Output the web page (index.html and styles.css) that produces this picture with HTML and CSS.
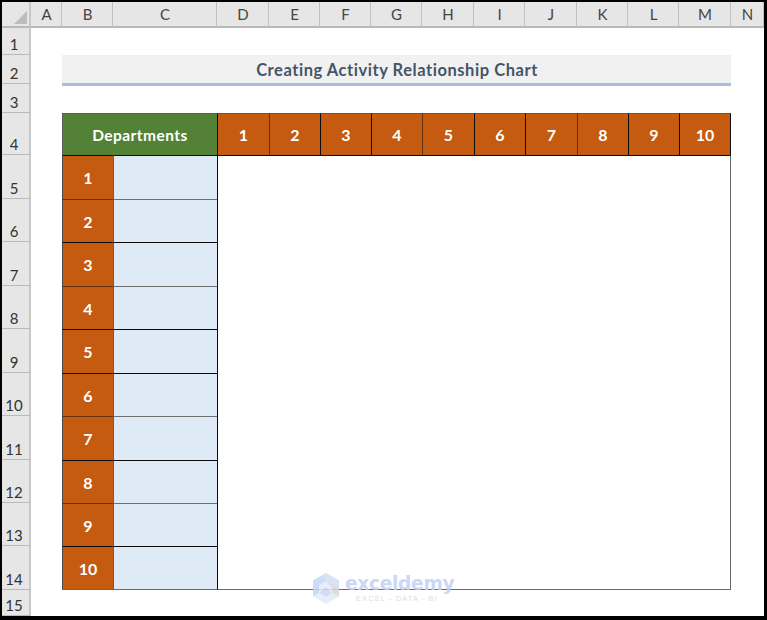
FILE: index.html
```html
<!DOCTYPE html>
<html lang="en">
<head>
<meta charset="utf-8">
<title>Creating Activity Relationship Chart</title>
<link rel="stylesheet" href="styles.css">
</head>
<body>
<div class="frame">
  <div class="sheet">
    <div class="corner"><span class="corner-mark"></span></div>
    <div class="ch">A</div><div class="ch">B</div><div class="ch">C</div><div class="ch">D</div><div class="ch">E</div><div class="ch">F</div><div class="ch">G</div><div class="ch">H</div><div class="ch">I</div><div class="ch">J</div><div class="ch">K</div><div class="ch">L</div><div class="ch">M</div><div class="ch">N</div>

    <div class="rh">1</div><div class="blank-row"></div>

    <div class="rh">2</div><div></div>
    <div class="title">Creating Activity Relationship Chart</div><div></div>

    <div class="rh">3</div><div class="blank-row"></div>

    <div class="rh">4</div><div></div>
    <div class="cell dept-head">Departments</div>
    <div class="cell num top">1</div>
    <div class="cell num top soft">2</div>
    <div class="cell num top">3</div>
    <div class="cell num top">4</div>
    <div class="cell num top soft">5</div>
    <div class="cell num top">6</div>
    <div class="cell num top">7</div>
    <div class="cell num top soft">8</div>
    <div class="cell num top">9</div>
    <div class="cell num top last">10</div>
    <div></div>

    <div class="rh">5</div><div></div>
    <div class="cell num first">1</div><div class="cell name"></div>
    <div class="cell chart"></div><div></div>

    <div class="rh">6</div><div></div>
    <div class="cell num first soft-top">2</div><div class="cell name soft-top"></div><div></div>

    <div class="rh">7</div><div></div>
    <div class="cell num first">3</div><div class="cell name"></div><div></div>

    <div class="rh">8</div><div></div>
    <div class="cell num first soft-top">4</div><div class="cell name soft-top"></div><div></div>

    <div class="rh">9</div><div></div>
    <div class="cell num first">5</div><div class="cell name"></div><div></div>

    <div class="rh">10</div><div></div>
    <div class="cell num first">6</div><div class="cell name"></div><div></div>

    <div class="rh">11</div><div></div>
    <div class="cell num first soft-top">7</div><div class="cell name soft-top"></div><div></div>

    <div class="rh">12</div><div></div>
    <div class="cell num first">8</div><div class="cell name"></div><div></div>

    <div class="rh">13</div><div></div>
    <div class="cell num first soft-top">9</div><div class="cell name soft-top"></div><div></div>

    <div class="rh">14</div><div></div>
    <div class="cell num first bottom">10</div><div class="cell name bottom"></div><div></div>

    <div class="rh">15</div><div class="blank-row"></div>

    <div class="watermark">
      <svg class="wm-logo" width="28" height="32" viewBox="0 0 28 32" aria-hidden="true">
        <polygon points="14,0 27,7.5 27,23.5 14,31 1,23.5 1,7.5" fill="#e6ebf9"/>
        <polygon points="14,0 27,7.5 27,15 14,8 1,15 1,7.5" fill="#d3dcf6"/>
        <polygon points="1,7.5 10,3 14,8 7,12 7,20 1,23.5" fill="#c6d4f6"/>
        <polygon points="14,8 27,15 27,23.5 20,20 20,14" fill="#d8d8d8"/>
        <polygon points="7,20 14,14 20,20 14,24" fill="#cbd7f5"/>
      </svg>
      <div class="wm-text">
        <span class="wm-name">exceldemy</span>
        <span class="wm-tag">EXCEL - DATA - BI</span>
      </div>
    </div>
  </div>
</div>
</body>
</html>
```
FILE: styles.css
```css
* { box-sizing: border-box; }
html, body { margin: 0; padding: 0; }
body { background: #000; }

.frame {
  width: 767px;
  height: 620px;
  background: #000;
  padding: 2px 3px 4px 2px;
  overflow: hidden;
}

.sheet {
  position: relative;
  display: grid;
  width: 762px;
  height: 614px;
  background: #fff;
  font-family: "Lato", "Liberation Sans", sans-serif;
  grid-template-columns: 29px 31px 51px 104px 52px 51px 51px 51px 52px 51px 52px 51px 51px 52px 33px;
  grid-template-rows: 26px 27px 29px 29px 42px 44px 43px 44px 43px 44px 43px 44px 43px 43px 44px 26px;
}

.corner, .ch {
  background: #e6e6e6;
  border-bottom: 2px solid #b9b9b9;
}
.corner { border-right: 2px solid #c8c8c8; position: relative; }
.corner-mark {
  position: absolute;
  left: 12px;
  top: 9px;
  width: 13px;
  height: 13px;
  background: #bdbdbd;
  clip-path: polygon(100% 0, 100% 100%, 0 100%);
}

.ch {
  display: flex;
  align-items: center;
  justify-content: center;
  border-right: 1px solid #c0c0c0;
  font-size: 15px;
  color: #444;
  padding: 0 0 1px 1px;
}

.rh {
  display: flex;
  align-items: flex-end;
  justify-content: center;
  background: #e6e6e6;
  border-right: 2px solid #c8c8c8;
  border-bottom: 1px solid #b9b9b9;
  font-size: 15px;
  line-height: 18px;
  color: #333;
  padding: 0 3px 1px 0;
}

.blank-row { grid-column: span 14; }

.title {
  grid-column: span 12;
  display: flex;
  align-items: center;
  justify-content: center;
  background: #f1f1f1;
  border-bottom: 1px solid #a9bde2;
  box-shadow: 0 2px 0 #a9bde2;
  font-weight: 700;
  font-size: 16.5px;
  letter-spacing: 0.55px;
  color: #44546a;
  padding: 1px 0 0 1px;
}

.cell {
  display: flex;
  align-items: center;
  justify-content: center;
  border-top: 1px solid #0c0c0c;
  border-left: 1px solid #0c0c0c;
  font-weight: 700;
  font-size: 16px;
  color: #fff;
}

.dept-head {
  grid-column: span 2;
  background: #538135;
  border-top-color: #5a5a5a;
  border-left-color: #5a5a5a;
  font-size: 15.5px;
  letter-spacing: 0.45px;
}

.num { background: #c55a11; }
.num.top { border-top-color: #5a5a5a; }
.num.top.soft { border-left-color: #64310f; }
.num.top.last { border-right: 1px solid #0c0c0c; }
.num.first { border-left-color: #4a4a4a; }

.name { background: #deeaf6; border-left-color: #5f5f5f; }

.soft-top { border-top-color: #6f6f6f; }
.num.soft-top { border-top-color: #64310f; }

.bottom { border-bottom: 1px solid #6a6a6a; }

.chart {
  grid-row: span 10;
  grid-column: span 10;
  background: #fff;
  border-right: 1px solid #666;
  border-bottom: 1px solid #6a6a6a;
}

.watermark {
  position: absolute;
  left: 310px;
  top: 571px;
  display: flex;
  gap: 5px;
  opacity: 0.85;
  pointer-events: none;
}
.wm-text { display: flex; flex-direction: column; align-items: flex-start; }
.wm-name {
  font-family: "DejaVu Sans", sans-serif;
  font-weight: 700;
  font-size: 18.6px;
  line-height: 21px;
  letter-spacing: -0.3px;
  color: #c3d1f5;
}
.wm-tag {
  font-family: "Liberation Sans", sans-serif;
  font-size: 7.5px;
  line-height: 9px;
  letter-spacing: 1.1px;
  color: #d8d8d8;
  padding-left: 11px;
}
```
